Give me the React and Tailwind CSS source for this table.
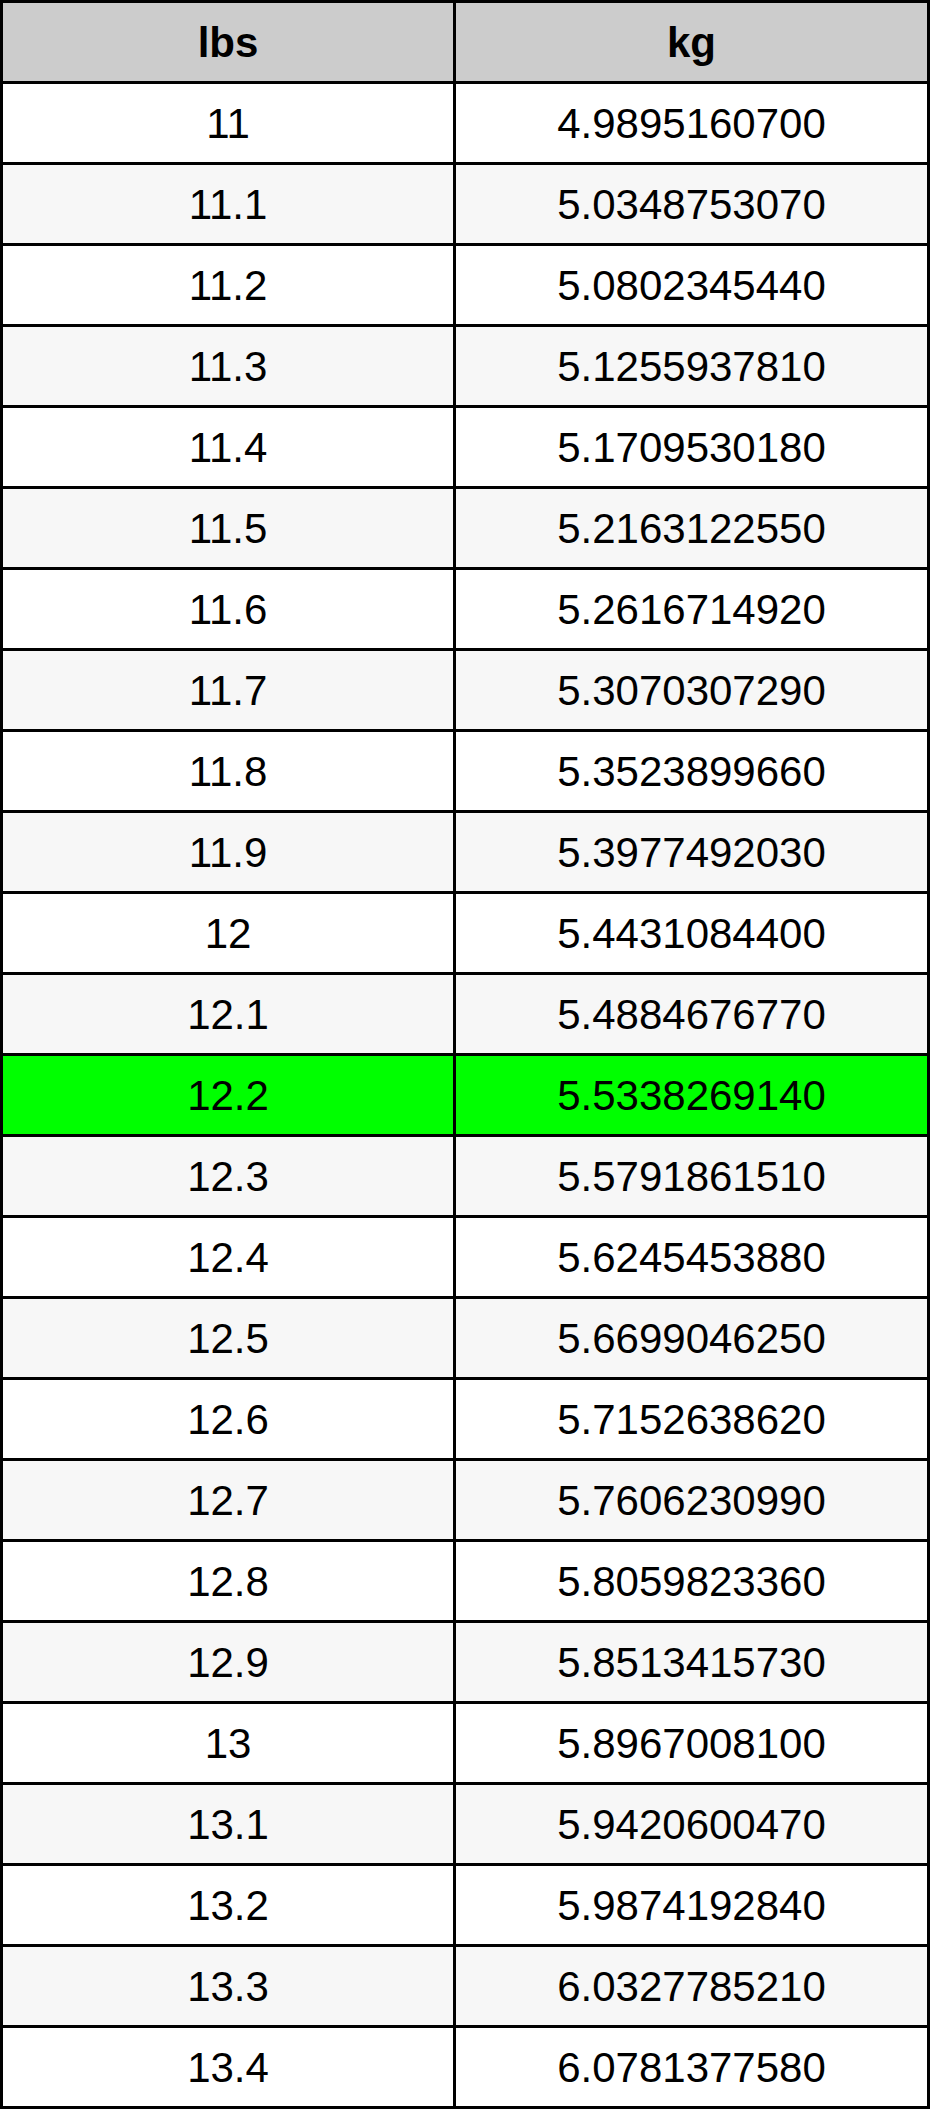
import React from 'react';

const ROWS = [
  ['11', '4.9895160700'],
  ['11.1', '5.0348753070'],
  ['11.2', '5.0802345440'],
  ['11.3', '5.1255937810'],
  ['11.4', '5.1709530180'],
  ['11.5', '5.2163122550'],
  ['11.6', '5.2616714920'],
  ['11.7', '5.3070307290'],
  ['11.8', '5.3523899660'],
  ['11.9', '5.3977492030'],
  ['12', '5.4431084400'],
  ['12.1', '5.4884676770'],
  ['12.2', '5.5338269140'],
  ['12.3', '5.5791861510'],
  ['12.4', '5.6245453880'],
  ['12.5', '5.6699046250'],
  ['12.6', '5.7152638620'],
  ['12.7', '5.7606230990'],
  ['12.8', '5.8059823360'],
  ['12.9', '5.8513415730'],
  ['13', '5.8967008100'],
  ['13.1', '5.9420600470'],
  ['13.2', '5.9874192840'],
  ['13.3', '6.0327785210'],
  ['13.4', '6.0781377580'],
];

const HIGHLIGHT = '12.2';

const cellBase = 'h-[78px] flex items-center justify-center';

export default function App() {
  return (
    <div className="w-[930px] bg-white font-['Liberation_Sans',Arial,sans-serif] text-[42px] text-black">
      <div className="grid grid-cols-[450px_471px] gap-[3px] bg-black p-[3px]">
        <div className={`${cellBase} bg-[#cccccc] font-bold`}>lbs</div>
        <div className={`${cellBase} bg-[#cccccc] font-bold`}>kg</div>
        {ROWS.map(([lbs, kg], i) => {
          const bg = lbs === HIGHLIGHT ? 'bg-[#00ff00]' : i % 2 === 1 ? 'bg-[#f7f7f7]' : 'bg-white';
          return (
            <React.Fragment key={lbs}>
              <div className={`${cellBase} ${bg}`}>{lbs}</div>
              <div className={`${cellBase} ${bg}`}>{kg}</div>
            </React.Fragment>
          );
        })}
      </div>
    </div>
  );
}
